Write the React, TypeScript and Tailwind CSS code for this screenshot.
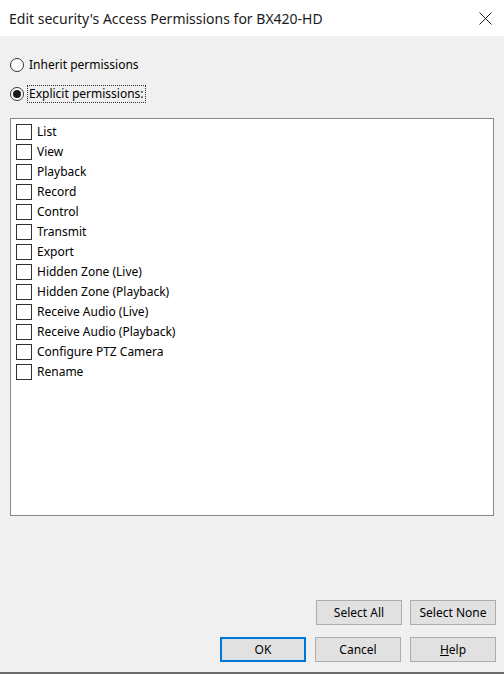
const PERMISSIONS = [
  "List",
  "View",
  "Playback",
  "Record",
  "Control",
  "Transmit",
  "Export",
  "Hidden Zone (Live)",
  "Hidden Zone (Playback)",
  "Receive Audio (Live)",
  "Receive Audio (Playback)",
  "Configure PTZ Camera",
  "Rename",
];

function Radio({ checked, label, focused }: { checked?: boolean; label: string; focused?: boolean }) {
  return (
    <label className="flex h-[18px] items-center">
      <span className="flex h-[14px] w-[14px] items-center justify-center rounded-full border border-[#333333] bg-white">
        {checked && <span className="h-[8px] w-[8px] rounded-full bg-[#1a1a1a]" />}
      </span>
      <span
        className={`ml-[4px] px-[1px] leading-[16px] ${
          focused ? "outline outline-1 outline-dotted outline-[#333333]" : ""
        }`}
      >
        {label}
      </span>
    </label>
  );
}

function Button({ label, primary, children }: { label?: string; primary?: boolean; children?: React.ReactNode }) {
  return (
    <button
      className={`h-[25px] w-[86px] bg-[#e1e1e1] text-[12px] text-black ${
        primary ? "border-2 border-[#0078d7]" : "border border-[#adadad]"
      }`}
    >
      {children ?? label}
    </button>
  );
}

export default function App() {
  return (
    <div
      className="flex h-[674px] w-[504px] flex-col overflow-hidden bg-[#f0f0f0] text-[12px] text-black"
      style={{ fontFamily: '"Noto Sans", "Open Sans", sans-serif' }}
    >
      <div className="flex h-[36px] shrink-0 items-center justify-between bg-white pl-[9px] pr-[12px]">
        <span className="text-[14px] text-[#1a1a1a]">Edit security's Access Permissions for BX420-HD</span>
        <svg width="13" height="13" viewBox="0 0 13 13" className="text-[#1a1a1a]">
          <path d="M0.5 0.5 L12.5 12.5 M12.5 0.5 L0.5 12.5" stroke="currentColor" strokeWidth="1" />
        </svg>
      </div>

      <div className="flex flex-1 flex-col px-[10px]">
        <div className="mt-[20px] flex flex-col gap-[11px]">
          <Radio label="Inherit permissions" />
          <Radio label="Explicit permissions:" checked focused />
        </div>

        <div className="mt-[15px] flex h-[398px] flex-col border border-[#82878f] bg-white pl-[5px] pt-[3px]">
          {PERMISSIONS.map((p) => (
            <div key={p} className="flex h-[20px] items-center">
              <span className="h-[16px] w-[16px] border border-[#333333] bg-white" />
              <span className="ml-[5px]">{p}</span>
            </div>
          ))}
        </div>

        <div className="mr-[-2px] mt-auto flex flex-col items-end gap-[12px] pb-[10px]">
          <div className="flex gap-[8px]">
            <Button label="Select All" />
            <Button label="Select None" />
          </div>
          <div className="flex gap-[9px]">
            <Button label="OK" primary />
            <Button label="Cancel" />
            <Button>
              <span className="underline">H</span>elp
            </Button>
          </div>
        </div>
      </div>
      <div className="h-[2px] shrink-0 bg-[#6b6b6b]" />
    </div>
  );
}
